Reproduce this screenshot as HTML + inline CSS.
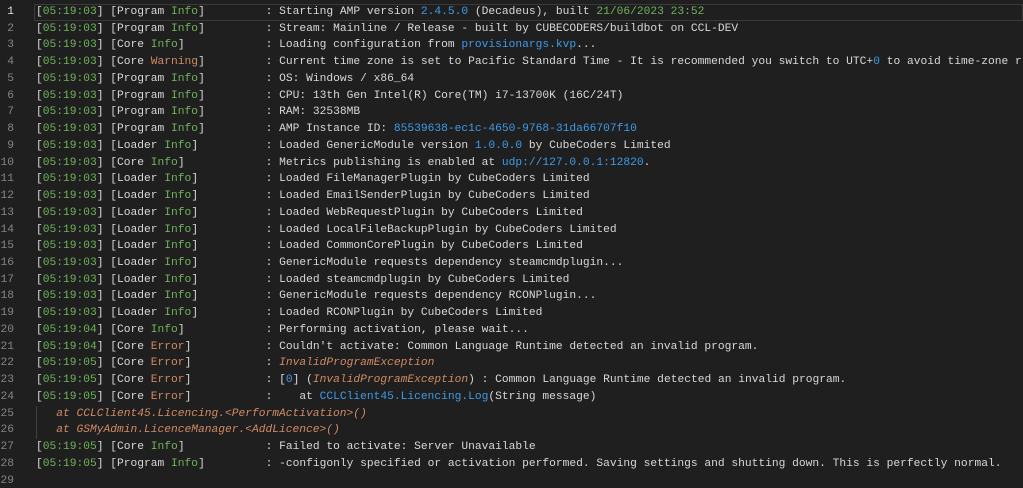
<!DOCTYPE html>
<html><head><meta charset="utf-8"><style>
html,body{margin:0;padding:0;background:#1f1f1f;width:1023px;height:488px;overflow:hidden}
.w{position:relative;padding-top:4px;font-family:"Liberation Mono",monospace;font-size:11.26px}
.l{height:16.74px;line-height:16.74px;white-space:pre;position:relative;color:#d8d8d8}
.n{position:absolute;left:0;width:14px;text-align:right;color:#858585}
.t{position:absolute;left:36px}
.g{color:#6fb35a}.o{color:#d18a65}.b{color:#3f9be8}.i{font-style:italic}
.cur{position:absolute;left:34px;right:0;top:0;height:15px;border:1px solid #3a3a3a}
.guide{position:absolute;left:36px;top:0;bottom:0;border-left:1px solid #404040}
</style></head><body><div class="w">
<div class="l"><div class="cur"></div><span class="n" style="color:#e6e6e6">1</span><span class="t">[<span class="g">05:19:03</span>] [Program <span class="g">Info</span>]         : Starting AMP version <span class="b">2.4.5.0</span> (Decadeus), built <span class="g">21/06/2023 23:52</span></span></div>
<div class="l"><span class="n">2</span><span class="t">[<span class="g">05:19:03</span>] [Program <span class="g">Info</span>]         : Stream: Mainline / Release - built by CUBECODERS/buildbot on CCL-DEV</span></div>
<div class="l"><span class="n">3</span><span class="t">[<span class="g">05:19:03</span>] [Core <span class="g">Info</span>]            : Loading configuration from <span class="b">provisionargs.kvp</span>...</span></div>
<div class="l"><span class="n">4</span><span class="t">[<span class="g">05:19:03</span>] [Core <span class="o">Warning</span>]         : Current time zone is set to Pacific Standard Time - It is recommended you switch to UTC+<span class="b">0</span> to avoid time-zone r</span></div>
<div class="l"><span class="n">5</span><span class="t">[<span class="g">05:19:03</span>] [Program <span class="g">Info</span>]         : OS: Windows / x86_64</span></div>
<div class="l"><span class="n">6</span><span class="t">[<span class="g">05:19:03</span>] [Program <span class="g">Info</span>]         : CPU: 13th Gen Intel(R) Core(TM) i7-13700K (16C/24T)</span></div>
<div class="l"><span class="n">7</span><span class="t">[<span class="g">05:19:03</span>] [Program <span class="g">Info</span>]         : RAM: 32538MB</span></div>
<div class="l"><span class="n">8</span><span class="t">[<span class="g">05:19:03</span>] [Program <span class="g">Info</span>]         : AMP Instance ID: <span class="b">85539638-ec1c-4650-9768-31da66707f10</span></span></div>
<div class="l"><span class="n">9</span><span class="t">[<span class="g">05:19:03</span>] [Loader <span class="g">Info</span>]          : Loaded GenericModule version <span class="b">1.0.0.0</span> by CubeCoders Limited</span></div>
<div class="l"><span class="n">10</span><span class="t">[<span class="g">05:19:03</span>] [Core <span class="g">Info</span>]            : Metrics publishing is enabled at <span class="b">udp://127.0.0.1:12820</span>.</span></div>
<div class="l"><span class="n">11</span><span class="t">[<span class="g">05:19:03</span>] [Loader <span class="g">Info</span>]          : Loaded FileManagerPlugin by CubeCoders Limited</span></div>
<div class="l"><span class="n">12</span><span class="t">[<span class="g">05:19:03</span>] [Loader <span class="g">Info</span>]          : Loaded EmailSenderPlugin by CubeCoders Limited</span></div>
<div class="l"><span class="n">13</span><span class="t">[<span class="g">05:19:03</span>] [Loader <span class="g">Info</span>]          : Loaded WebRequestPlugin by CubeCoders Limited</span></div>
<div class="l"><span class="n">14</span><span class="t">[<span class="g">05:19:03</span>] [Loader <span class="g">Info</span>]          : Loaded LocalFileBackupPlugin by CubeCoders Limited</span></div>
<div class="l"><span class="n">15</span><span class="t">[<span class="g">05:19:03</span>] [Loader <span class="g">Info</span>]          : Loaded CommonCorePlugin by CubeCoders Limited</span></div>
<div class="l"><span class="n">16</span><span class="t">[<span class="g">05:19:03</span>] [Loader <span class="g">Info</span>]          : GenericModule requests dependency steamcmdplugin...</span></div>
<div class="l"><span class="n">17</span><span class="t">[<span class="g">05:19:03</span>] [Loader <span class="g">Info</span>]          : Loaded steamcmdplugin by CubeCoders Limited</span></div>
<div class="l"><span class="n">18</span><span class="t">[<span class="g">05:19:03</span>] [Loader <span class="g">Info</span>]          : GenericModule requests dependency RCONPlugin...</span></div>
<div class="l"><span class="n">19</span><span class="t">[<span class="g">05:19:03</span>] [Loader <span class="g">Info</span>]          : Loaded RCONPlugin by CubeCoders Limited</span></div>
<div class="l"><span class="n">20</span><span class="t">[<span class="g">05:19:04</span>] [Core <span class="g">Info</span>]            : Performing activation, please wait...</span></div>
<div class="l"><span class="n">21</span><span class="t">[<span class="g">05:19:04</span>] [Core <span class="o">Error</span>]           : Couldn't activate: Common Language Runtime detected an invalid program.</span></div>
<div class="l"><span class="n">22</span><span class="t">[<span class="g">05:19:05</span>] [Core <span class="o">Error</span>]           : <span class="o i">InvalidProgramException</span></span></div>
<div class="l"><span class="n">23</span><span class="t">[<span class="g">05:19:05</span>] [Core <span class="o">Error</span>]           : [<span class="b">0</span>] (<span class="o i">InvalidProgramException</span>) : Common Language Runtime detected an invalid program.</span></div>
<div class="l"><span class="n">24</span><span class="t">[<span class="g">05:19:05</span>] [Core <span class="o">Error</span>]           :    at <span class="b">CCLClient45.Licencing.Log</span>(String message)</span></div>
<div class="l"><div class="guide"></div><span class="n">25</span><span class="t o i">   at CCLClient45.Licencing.&lt;PerformActivation&gt;()</span></div>
<div class="l"><div class="guide"></div><span class="n">26</span><span class="t o i">   at GSMyAdmin.LicenceManager.&lt;AddLicence&gt;()</span></div>
<div class="l"><span class="n">27</span><span class="t">[<span class="g">05:19:05</span>] [Core <span class="g">Info</span>]            : Failed to activate: Server Unavailable</span></div>
<div class="l"><span class="n">28</span><span class="t">[<span class="g">05:19:05</span>] [Program <span class="g">Info</span>]         : -configonly specified or activation performed. Saving settings and shutting down. This is perfectly normal.</span></div>
<div class="l"><span class="n">29</span></div>
</div></body></html>
